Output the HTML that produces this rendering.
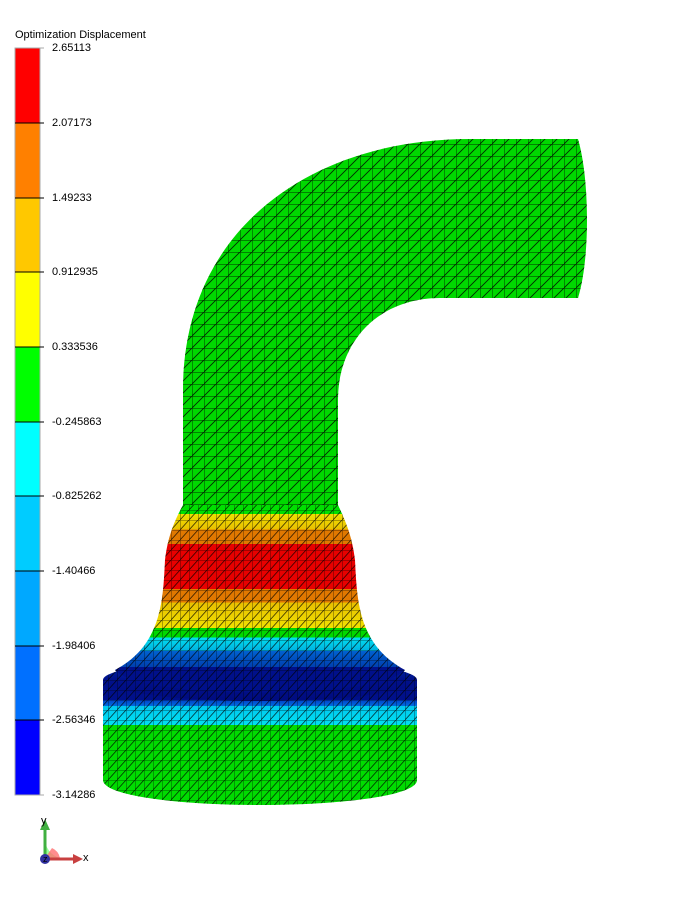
<!DOCTYPE html>
<html><head><style>
html,body{margin:0;padding:0;background:#fff;}
body{width:678px;height:905px;position:relative;overflow:hidden;font-family:"Liberation Sans",sans-serif;}
.t{position:absolute;font-size:11px;color:#000;left:52px;}
</style></head><body>
<svg width="678" height="905" style="position:absolute;left:0;top:0">
<defs>
<pattern id="mesh" width="12" height="12" patternUnits="userSpaceOnUse">
<path d="M0 0H12M0 0V12M0 12L12 0" stroke="#000" stroke-width="0.9" opacity="0.8" fill="none"/>
</pattern>
<pattern id="mesh2" width="9" height="10" patternUnits="userSpaceOnUse">
<path d="M0 0H9M0 0V10M0 10L9 0" stroke="#000" stroke-width="0.8" opacity="0.75" fill="none"/>
</pattern>
<linearGradient id="fl" x1="0" y1="505" x2="0" y2="700" gradientUnits="userSpaceOnUse">
<stop offset="0" stop-color="#00e000"/><stop offset="0.045" stop-color="#00e000"/>
<stop offset="0.045" stop-color="#f0e000"/><stop offset="0.125" stop-color="#e8c000"/>
<stop offset="0.125" stop-color="#e07800"/><stop offset="0.2" stop-color="#e07800"/>
<stop offset="0.2" stop-color="#e80000"/><stop offset="0.43" stop-color="#e80000"/>
<stop offset="0.43" stop-color="#e07800"/><stop offset="0.5" stop-color="#e07800"/>
<stop offset="0.5" stop-color="#e8c000"/><stop offset="0.63" stop-color="#f0e000"/>
<stop offset="0.63" stop-color="#00d800"/><stop offset="0.68" stop-color="#00d800"/>
<stop offset="0.68" stop-color="#00e0f0"/><stop offset="0.75" stop-color="#00b0e0"/>
<stop offset="0.75" stop-color="#0060d0"/><stop offset="0.83" stop-color="#0040b0"/>
<stop offset="0.83" stop-color="#00108a"/><stop offset="1" stop-color="#00108a"/>
</linearGradient>
<linearGradient id="bs" x1="0" y1="675" x2="0" y2="800" gradientUnits="userSpaceOnUse">
<stop offset="0" stop-color="#00108a"/><stop offset="0.2" stop-color="#00108a"/>
<stop offset="0.2" stop-color="#0040c8"/><stop offset="0.25" stop-color="#0070e0"/>
<stop offset="0.25" stop-color="#00c8f0"/><stop offset="0.4" stop-color="#00e0f0"/>
<stop offset="0.4" stop-color="#00dc00"/><stop offset="1" stop-color="#00dc00"/>
</linearGradient>
<linearGradient id="top" x1="0" y1="660" x2="0" y2="700" gradientUnits="userSpaceOnUse">
<stop offset="0" stop-color="#0030b0"/><stop offset="0.5" stop-color="#00108a"/><stop offset="1" stop-color="#000c80"/>
</linearGradient>
</defs>
<!-- pipe -->
<path d="M183,510 L183,390 C183,230 310,139 470,139 L578,139 C590,180 590,260 578,298 L440,298 C380,298 338,340 338,400 L338,510 Z" fill="#00d800"/>
<path d="M183,510 L183,390 C183,230 310,139 470,139 L578,139 C590,180 590,260 578,298 L440,298 C380,298 338,340 338,400 L338,510 Z" fill="url(#mesh)"/>
<!-- base side -->
<path d="M103,680 L417,680 L417,780 C417,796 340,805 260,805 C180,805 103,796 103,780 Z" fill="url(#bs)"/>
<path d="M103,680 L417,680 L417,780 C417,796 340,805 260,805 C180,805 103,796 103,780 Z" fill="url(#mesh2)"/>
<!-- base top ellipse -->
<ellipse cx="260" cy="680" rx="157" ry="21" fill="url(#top)"/>
<ellipse cx="260" cy="680" rx="157" ry="21" fill="url(#mesh2)"/>
<!-- flare -->
<path d="M183,505 L338,505 C345,520 352,535 355,560 C357,600 358,645 405,670 C380,700 140,700 115,670 C162,645 163,600 165,560 C168,535 175,520 183,505 Z" fill="url(#fl)"/>
<path d="M183,505 L338,505 C345,520 352,535 355,560 C357,600 358,645 405,670 C380,700 140,700 115,670 C162,645 163,600 165,560 C168,535 175,520 183,505 Z" fill="url(#mesh2)"/>
<!-- legend -->
<rect x="15" y="48" width="25" height="75" fill="#ff0000"/>
<rect x="15" y="123" width="25" height="75" fill="#ff8000"/>
<rect x="15" y="198" width="25" height="74" fill="#ffc800"/>
<rect x="15" y="272" width="25" height="75" fill="#ffff00"/>
<rect x="15" y="347" width="25" height="75" fill="#00ff00"/>
<rect x="15" y="422" width="25" height="74" fill="#00ffff"/>
<rect x="15" y="496" width="25" height="75" fill="#00ccff"/>
<rect x="15" y="571" width="25" height="75" fill="#00a8ff"/>
<rect x="15" y="646" width="25" height="74" fill="#0070ff"/>
<rect x="15" y="720" width="25" height="75" fill="#0000ff"/>
<rect x="15" y="48" width="25" height="747" fill="none" stroke="#aaa" stroke-width="1"/>
<g stroke="#000" stroke-width="1">
<line x1="15" y1="123" x2="44" y2="123"/><line x1="15" y1="198" x2="44" y2="198"/>
<line x1="15" y1="272" x2="44" y2="272"/><line x1="15" y1="347" x2="44" y2="347"/>
<line x1="15" y1="422" x2="44" y2="422"/><line x1="15" y1="496" x2="44" y2="496"/>
<line x1="15" y1="571" x2="44" y2="571"/><line x1="15" y1="646" x2="44" y2="646"/>
<line x1="15" y1="720" x2="44" y2="720"/>
</g>
<line x1="40" y1="48" x2="44" y2="48" stroke="#aaa"/><line x1="40" y1="795" x2="44" y2="795" stroke="#aaa"/>
<!-- axes -->
<path d="M45,858 L45,838 A20,20 0 0 0 60,858 Z" fill="#80ff80" opacity="0.8"/>
<path d="M45,858 L60,858 A14,14 0 0 0 52,848 Z" fill="#ff7070" opacity="0.8"/>
<line x1="45" y1="858" x2="45" y2="826" stroke="#40b040" stroke-width="3"/>
<path d="M40,830 L45,819 L50,830 Z" fill="#40b040"/>
<line x1="45" y1="859" x2="76" y2="859" stroke="#c84040" stroke-width="3"/>
<path d="M73,854 L83,859 L73,864 Z" fill="#c84040"/>
<circle cx="45" cy="859" r="5" fill="#3030a0"/>
<text x="41" y="824" font-size="11" font-family="Liberation Sans">y</text>
<text x="83" y="861" font-size="11" font-family="Liberation Sans">x</text>
<text x="43" y="862" font-size="9" font-family="Liberation Sans">z</text>
</svg>
<div class="t" style="left:15px;top:29px;">Optimization Displacement</div>
<div class="t" style="top:42px">2.65113</div>
<div class="t" style="top:117px">2.07173</div>
<div class="t" style="top:192px">1.49233</div>
<div class="t" style="top:266px">0.912935</div>
<div class="t" style="top:341px">0.333536</div>
<div class="t" style="top:416px">-0.245863</div>
<div class="t" style="top:490px">-0.825262</div>
<div class="t" style="top:565px">-1.40466</div>
<div class="t" style="top:640px">-1.98406</div>
<div class="t" style="top:714px">-2.56346</div>
<div class="t" style="top:789px">-3.14286</div>
</body></html>
